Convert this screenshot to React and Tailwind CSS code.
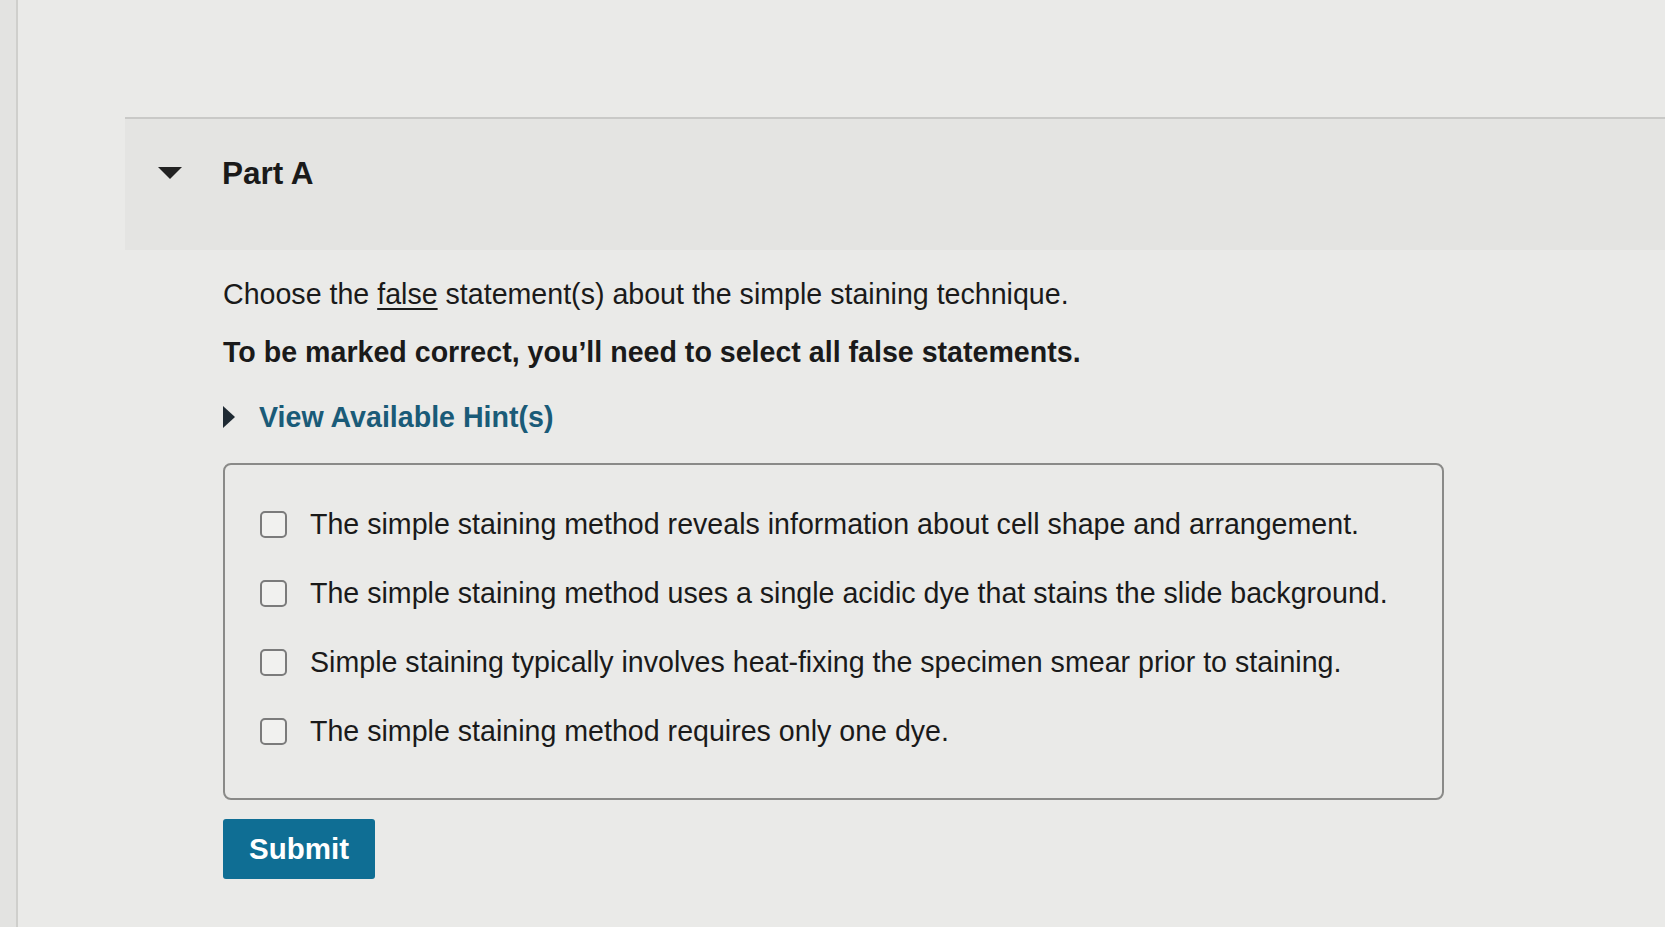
import React, { useState } from "react";

const STATEMENTS = [
  "The simple staining method reveals information about cell shape and arrangement.",
  "The simple staining method uses a single acidic dye that stains the slide background.",
  "Simple staining typically involves heat-fixing the specimen smear prior to staining.",
  "The simple staining method requires only one dye.",
];

function Choice({ text, checked, onToggle }) {
  return (
    <label className="flex items-center h-[34px] cursor-pointer">
      <span
        onClick={onToggle}
        className={
          "w-[27px] h-[27px] rounded-[5px] border-2 border-[#7b7b7b] bg-[#f1f1ef] shrink-0 flex items-center justify-center " +
          (checked ? "bg-[#0f6e94] border-[#0f6e94]" : "")
        }
      >
        {checked && (
          <svg width="16" height="16" viewBox="0 0 16 16">
            <path d="M3 8.5l3 3 7-7" stroke="#fff" strokeWidth="2.4" fill="none" />
          </svg>
        )}
      </span>
      <span className="ml-[23px] text-[28.6px] leading-[34px]">{text}</span>
    </label>
  );
}

export default function App() {
  const [checked, setChecked] = useState([false, false, false, false]);
  const [hintOpen, setHintOpen] = useState(false);

  function toggle(i) {
    setChecked(checked.map((c, idx) => (idx === i ? !c : c)));
  }

  return (
    <div className="min-h-screen w-full flex bg-[#eaeae8] text-[#1a1a1a] font-['Liberation_Sans',Arial,sans-serif]">
      <div className="w-[18px] shrink-0 bg-[#e3e3e1] border-r-2 border-[#cfcfcc]" />
      <div className="flex-1 pt-[117px] pl-[107px]">
        <section className="border-t-2 border-[#c9c9c7]">
          <header className="h-[131px] bg-[#e4e4e2] flex items-start pt-[36px] pl-[33px]">
            <div className="h-[36px] flex items-center">
              <svg width="24" height="14" viewBox="0 0 24 14">
                <path d="M0 1h24L12 13z" fill="#222" />
              </svg>
              <h2 className="ml-[40px] text-[31.5px] leading-[36px] font-bold">Part A</h2>
            </div>
          </header>

          <div className="pl-[98px] pt-[27px]">
            <p className="text-[28.6px] leading-[34px]">
              Choose the <span className="underline underline-offset-4 decoration-2">false</span> statement(s) about the simple staining technique.
            </p>
            <p className="mt-[24px] text-[28.6px] leading-[34px] font-bold">
              To be marked correct, you’ll need to select all false statements.
            </p>

            <button
              onClick={() => setHintOpen(!hintOpen)}
              className="mt-[31px] flex items-center h-[34px] text-[#1a5b78] font-bold text-[28.6px] leading-[34px]"
            >
              <svg width="12" height="22" viewBox="0 0 12 22" className={hintOpen ? "rotate-90" : ""}>
                <path d="M0 0l12 11L0 22z" fill="#1f2a33" />
              </svg>
              <span className="ml-[24px]">View Available Hint(s)</span>
            </button>

            <div className="mt-[29px] w-[1221px] border-2 border-[#8a8a88] rounded-[8px] pt-[42px] pb-[50px] pl-[35px] flex flex-col gap-[35px]">
              {STATEMENTS.map((s, i) => (
                <Choice key={i} text={s} checked={checked[i]} onToggle={() => toggle(i)} />
              ))}
            </div>

            <button className="mt-[19px] w-[152px] h-[60px] rounded-[3px] bg-[#0f6e94] text-white text-[29.5px] font-bold">
              Submit
            </button>
          </div>
        </section>
      </div>
    </div>
  );
}
